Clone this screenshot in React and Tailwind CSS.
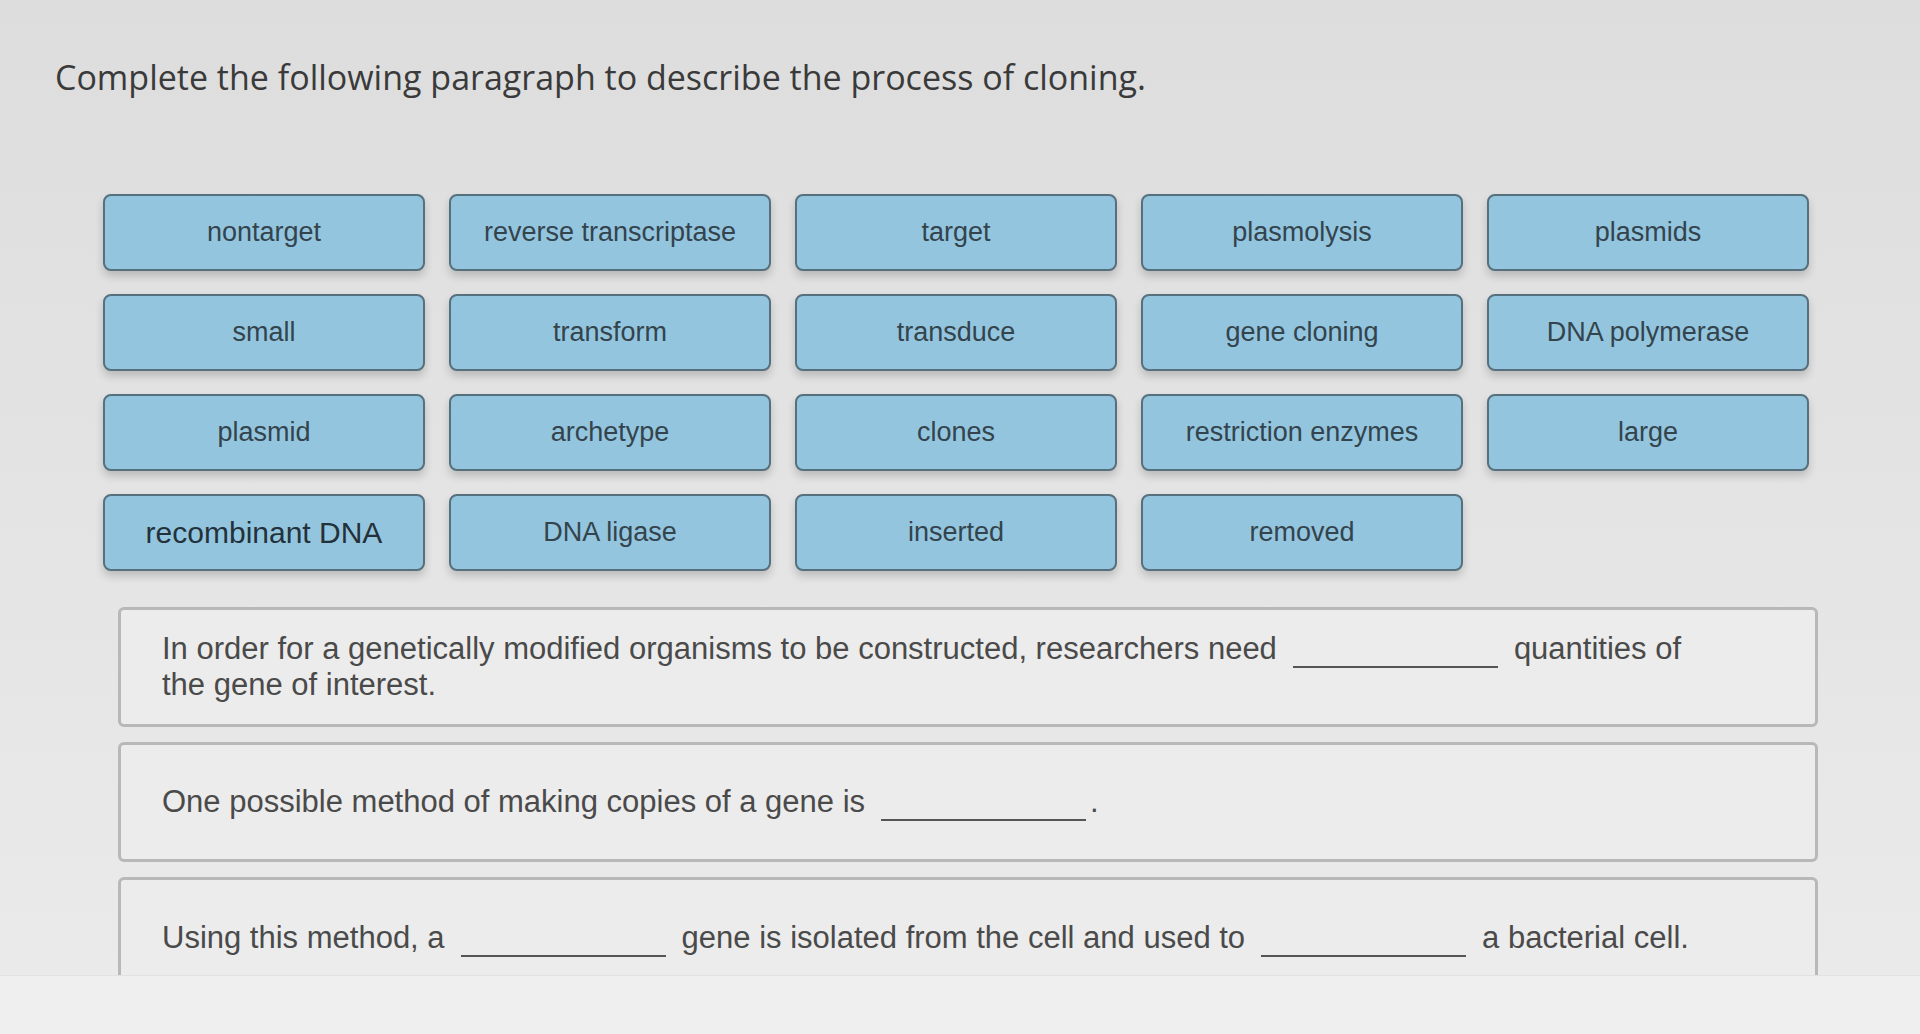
const tiles = [
  'nontarget', 'reverse transcriptase', 'target', 'plasmolysis', 'plasmids',
  'small', 'transform', 'transduce', 'gene cloning', 'DNA polymerase',
  'plasmid', 'archetype', 'clones', 'restriction enzymes', 'large',
  'recombinant DNA', 'DNA ligase', 'inserted', 'removed',
];

function Blank() {
  return (
    <span className="inline-block w-[205px] h-[2px] mx-4 bg-[#555] align-baseline translate-y-[9px]" />
  );
}

function Tile({ label }) {
  const big = label === 'recombinant DNA';
  return (
    <div className="h-[77px] rounded-lg border-2 border-[#56707e] bg-[#94c5df] shadow-[0_5px_8px_rgba(0,0,0,0.18)] flex items-center justify-center">
      <span
        className={
          big
            ? 'text-[30px] text-[#23323a]'
            : 'text-[27px] text-[#33444d]'
        }
      >
        {label}
      </span>
    </div>
  );
}

function SentenceBox({ children }) {
  return (
    <div className="h-[120px] rounded-md border-[3px] border-[#b8b8b8] bg-[#ececec] flex items-center pl-[41px] pr-10">
      <p className="text-[31px] leading-[36px] text-[#4a4a4a]">{children}</p>
    </div>
  );
}

export default function App() {
  return (
    <div
      className="w-full h-[1034px] overflow-hidden bg-gradient-to-b from-[#dddddd] to-[#ebebeb]"
      style={{ fontFamily: '"Liberation Sans", Arial, sans-serif' }}
    >
      <div className="h-[975px] overflow-hidden pt-[56px]">
        {/* Question prompt */}
        <h1
          className="pl-[55px] text-[34px] leading-[42px] text-[#3a3a3a]"
          style={{ fontFamily: '"Open Sans", sans-serif' }}
        >
          Complete the following paragraph to describe the process of cloning.
        </h1>

        {/* Draggable answer tiles */}
        <div className="ml-[103px] mt-[96px] w-[1706px] grid grid-cols-5 gap-x-6 gap-y-[23px]">
          {tiles.map((t) => (
            <Tile key={t} label={t} />
          ))}
        </div>

        {/* Sentences with drop zones */}
        <div className="ml-[118px] mt-[36px] w-[1700px] flex flex-col gap-[15px]">
          <SentenceBox>
            In order for a genetically modified organisms to be constructed, researchers need
            <Blank />
            quantities of
            <br />
            the gene of interest.
          </SentenceBox>
          <SentenceBox>
            One possible method of making copies of a gene is
            <Blank />
            <span className="-ml-3">.</span>
          </SentenceBox>
          <div className="h-[140px] rounded-t-md border-[3px] border-b-0 border-[#b8b8b8] bg-[#ececec] pl-[41px] pt-[40px]">
            <p className="text-[31px] leading-[36px] text-[#4a4a4a]">
              Using this method, a
              <Blank />
              gene is isolated from the cell and used to
              <Blank />
              a bacterial cell.
            </p>
          </div>
        </div>
      </div>
      <div className="h-[59px] bg-[#efefef] border-t border-[#e2e2e2]" />
    </div>
  );
}
